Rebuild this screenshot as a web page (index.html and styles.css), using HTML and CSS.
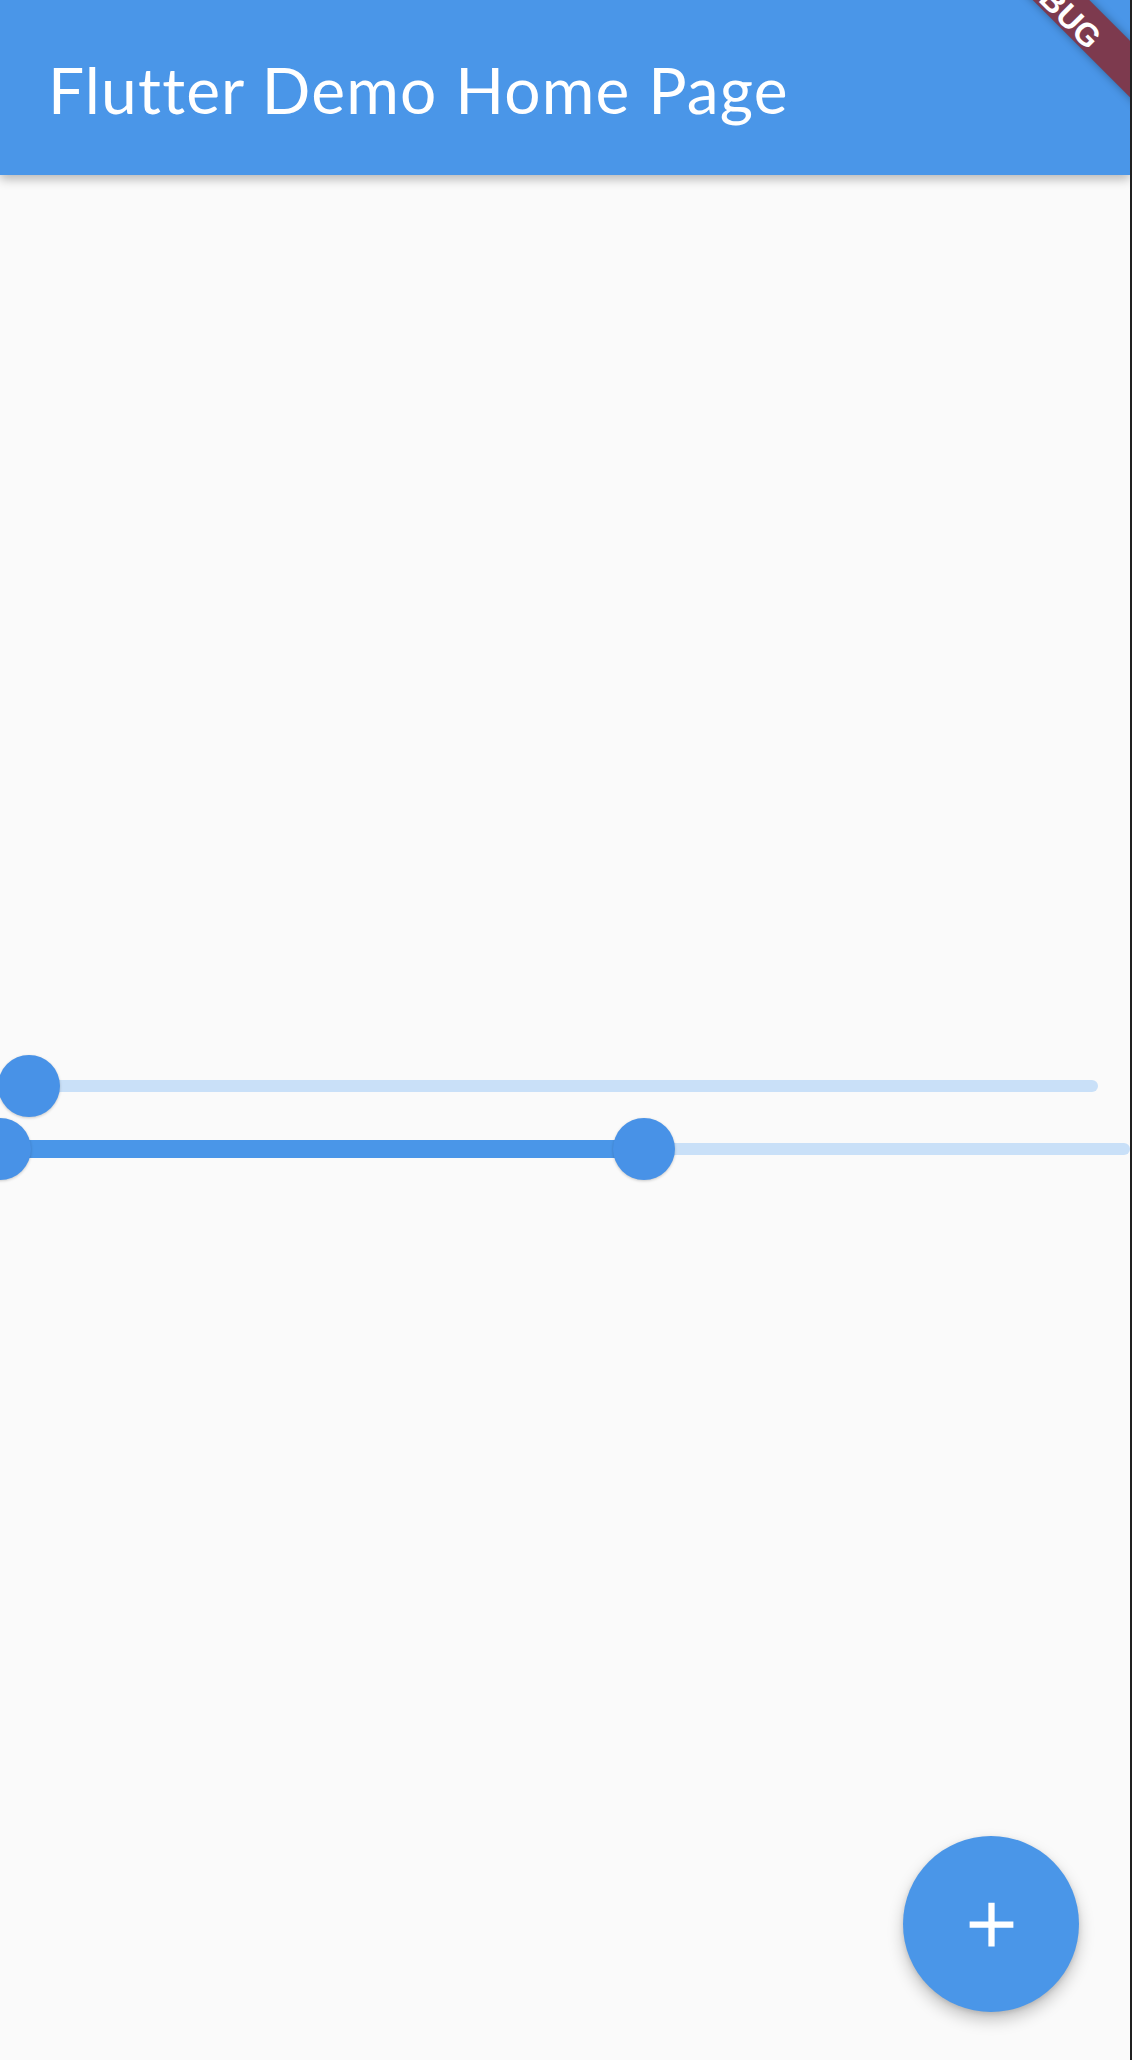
FILE: index.html
```html
<!DOCTYPE html>
<html lang="en">
<head>
    <meta charset="UTF-8">
    <meta name="viewport" content="width=device-width, initial-scale=1.0">
    <title>Flutter Demo Home Page</title>
    <link rel="stylesheet" href="styles.css">
</head>
<body>
    <div class="screen">
        <header class="app-bar">
            <h1 class="title">Flutter Demo Home Page</h1>
        </header>

        <main class="content">
            <div class="sliders">
                <div class="slider slider-single">
                    <div class="track">
                        <div class="thumb" style="left: 0%"></div>
                    </div>
                </div>

                <div class="slider slider-range">
                    <div class="track">
                        <div class="track-active" style="width: 57%"></div>
                        <div class="thumb" style="left: 0%"></div>
                        <div class="thumb" style="left: 57%"></div>
                    </div>
                </div>
            </div>
        </main>

        <button class="fab" type="button" aria-label="Increment">
            <svg viewBox="0 0 24 24" width="75" height="75">
                <path d="M19 13h-6v6h-2v-6H5v-2h6V5h2v6h6v2z" fill="#fff"/>
            </svg>
        </button>

        <div class="debug-banner"><span>DEBUG</span></div>
    </div>
</body>
</html>
```

FILE: styles.css
```css
:root {
    --primary: #4a96e8;
    --thumb: #4892e7;
    --track-light: #c9e0f8;
    --canvas: #fafafa;
    --banner: #7d3a4e;
}

* {
    box-sizing: border-box;
    margin: 0;
    padding: 0;
}

body {
    background-color: #202020;
    font-family: Lato, 'Noto Sans', sans-serif;
}

.screen {
    position: relative;
    width: 1130px;
    height: 2060px;
    background-color: var(--canvas);
    overflow: hidden;
    display: flex;
    flex-direction: column;
}

.app-bar {
    height: 175px;
    flex-shrink: 0;
    background-color: var(--primary);
    box-shadow: 0 4px 10px rgba(0, 0, 0, 0.28);
    display: flex;
    align-items: center;
    padding-left: 48px;
    position: relative;
    z-index: 1;
}

.title {
    color: #fff;
    font-size: 64px;
    font-weight: 400;
    letter-spacing: 1.2px;
    line-height: 1;
    padding-top: 4px;
}

.content {
    flex: 1;
    display: flex;
    flex-direction: column;
    justify-content: center;
}

.sliders {
    display: flex;
    flex-direction: column;
    gap: 1px;
}

.slider {
    height: 62px;
    display: flex;
    align-items: center;
}

.slider-single {
    padding-left: 29px;
    padding-right: 32px;
}

.track {
    position: relative;
    flex: 1;
    height: 12px;
    background-color: var(--track-light);
    border-radius: 0 6px 6px 0;
}

.track-active {
    position: absolute;
    left: 0;
    top: -3px;
    height: 18px;
    background-color: var(--primary);
}

.thumb {
    position: absolute;
    top: 50%;
    width: 62px;
    height: 62px;
    border-radius: 50%;
    background-color: var(--thumb);
    transform: translate(-50%, -50%);
    box-shadow: 0 1px 3px rgba(0, 0, 0, 0.2);
}

.fab {
    position: absolute;
    right: 51px;
    bottom: 48px;
    width: 176px;
    height: 176px;
    border: none;
    border-radius: 50%;
    background-color: var(--primary);
    box-shadow: 0 8px 16px rgba(0, 0, 0, 0.22), 0 2px 5px rgba(0, 0, 0, 0.12);
    display: flex;
    align-items: center;
    justify-content: center;
    cursor: pointer;
}

.debug-banner {
    position: absolute;
    left: 909px;
    top: -22px;
    width: 300px;
    height: 40px;
    background-color: var(--banner);
    box-shadow: 0 0 8px rgba(0, 0, 0, 0.35);
    transform: rotate(45deg);
    z-index: 2;
    display: flex;
    align-items: center;
    justify-content: center;
    padding-top: 12px;
}

.debug-banner span {
    color: #fff;
    font-family: 'Liberation Sans', Arial, sans-serif;
    font-weight: 700;
    font-size: 32px;
    line-height: 1;
}
```
